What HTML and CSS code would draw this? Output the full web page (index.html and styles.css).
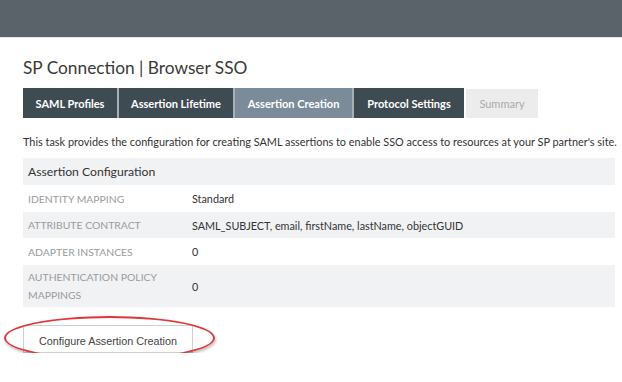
FILE: index.html
```html
<!DOCTYPE html>
<html>
<head>
    <title>SP Connection | Browser SSO</title>
    <link rel="stylesheet" href="styles.css">
</head>
<body>
    <div class="topbar"></div>

    <div class="page">
        <h1>SP Connection | Browser SSO</h1>

        <div class="tabs">
            <div class="tab">SAML Profiles</div>
            <div class="tab">Assertion Lifetime</div>
            <div class="tab active">Assertion Creation</div>
            <div class="tab">Protocol Settings</div>
            <div class="tab disabled">Summary</div>
        </div>

        <p class="intro">This task provides the configuration for creating SAML assertions to enable SSO access to resources at your SP partner's site.</p>

        <div class="summary-table">
            <div class="table-head">Assertion Configuration</div>
            <div class="row">
                <div class="label">Identity Mapping</div>
                <div class="value">Standard</div>
            </div>
            <div class="row shaded">
                <div class="label">Attribute Contract</div>
                <div class="value">SAML_SUBJECT, email, firstName, lastName, objectGUID</div>
            </div>
            <div class="row">
                <div class="label">Adapter Instances</div>
                <div class="value">0</div>
            </div>
            <div class="row shaded tall">
                <div class="label">Authentication Policy<br>Mappings</div>
                <div class="value">0</div>
            </div>
        </div>

        <div class="actions">
            <button class="configure">Configure Assertion Creation</button>
            <span class="circled"></span>
        </div>
    </div>
</body>
</html>
```

FILE: styles.css
```css
body {
    margin: 0;
    font-family: "Lato", "Open Sans", sans-serif;
    color: #333;
    background: #fff;
}

.topbar {
    height: 37px;
    background-color: #5b636a;
    border-bottom: 1px solid #e4e6e8;
}

.page {
    padding: 0 7px 0 23px;
}

h1 {
    font-size: 17.3px;
    font-weight: 400;
    color: #3a3a3a;
    margin: 19px 0 9px;
    line-height: 22px;
}

.tabs {
    display: flex;
    height: 30px;
}

.tab {
    display: flex;
    align-items: center;
    justify-content: center;
    background-color: #3e4b53;
    color: #fff;
    font-size: 11px;
    font-weight: 700;
    border-left: 2px solid #a8b0b6;
}

.tab:nth-child(1) { width: 94px; border-left: none; }
.tab:nth-child(2) { width: 114px; }
.tab:nth-child(3) { width: 117px; }
.tab:nth-child(4) { width: 110px; }

.tab.active {
    background-color: #7b8b99;
}

.tab.disabled {
    width: 72px;
    background-color: #ececed;
    color: #a9abad;
    font-weight: 400;
    border-left: 2px solid #fff;
    margin-top: 1px;
}

.intro {
    font-size: 10.9px;
    margin: 16px 0 8px;
    line-height: 16px;
    color: #333;
    white-space: nowrap;
}

.summary-table {
    font-size: 10.8px;
}

.table-head {
    height: 27px;
    display: flex;
    align-items: center;
    padding-left: 5px;
    background-color: #f1f2f4;
    font-size: 12.2px;
    color: #333;
}

.row {
    display: flex;
    align-items: center;
    height: 27px;
}

.row.shaded {
    background-color: #f1f2f4;
    height: 26px;
}

.row.tall {
    height: 42px;
}

.label {
    width: 164px;
    padding-left: 5px;
    text-transform: uppercase;
    color: #9a9b9d;
    font-size: 10.4px;
    line-height: 18px;
}

.value {
    color: #333;
}

.actions {
    position: relative;
    margin-top: 18px;
}

.configure {
    width: 170px;
    height: 28px;
    background: #fff;
    border: 1px solid #cfcfcf;
    font-family: "Liberation Sans", Arial, sans-serif;
    font-size: 10.8px;
    color: #444;
    padding: 0;
    padding-top: 3px;
}

.circled {
    position: absolute;
    left: -19px;
    top: -9px;
    width: 207px;
    height: 40px;
    border: 2px solid #e2363b;
    border-radius: 50%;
    box-shadow: 1px 2px 3px rgba(0, 0, 0, 0.25);
}
```
